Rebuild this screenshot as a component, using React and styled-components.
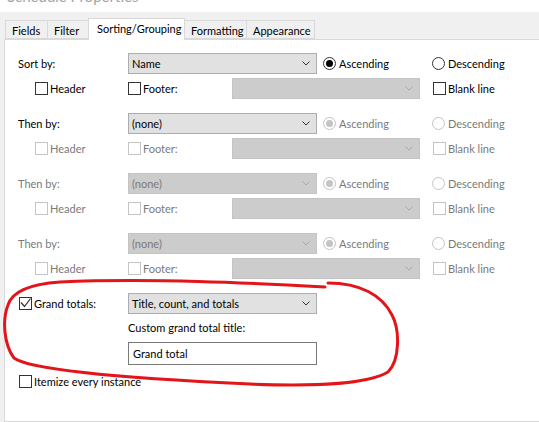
import React from 'react';
import styled, { createGlobalStyle } from 'styled-components';

const GlobalStyle = createGlobalStyle`
  html, body {
    margin: 0;
    padding: 0;
    background: #fff;
  }
  body {
    font-family: Lato, "Noto Sans", sans-serif;
    font-size: 11px;
    color: #000;
  }
`;

const Window = styled.div`
  position: relative;
  width: 539px;
  height: 422px;
  overflow: hidden;
  background: #fff;
`;

const TitleBar = styled.div`
  height: 12px;
  overflow: hidden;
  padding-left: 7px;
  span {
    display: block;
    margin-top: -11px;
    font-size: 15px;
    line-height: 15px;
    color: #a4a4a4;
  }
`;

const DialogBody = styled.div`
  background: #f0f0f0;
  padding: 6px 0 0 4px;
  height: 410px;
  box-sizing: border-box;
`;

const TabStrip = styled.div`
  display: flex;
  align-items: flex-end;
  height: 22px;
  margin: 0 0 -1px 1px;
  position: relative;
  z-index: 1;
`;

const Tab = styled.div`
  box-sizing: border-box;
  width: ${(p) => p.$w}px;
  height: ${(p) => (p.$active ? 22 : 19)}px;
  margin-bottom: ${(p) => (p.$active ? 0 : 1)}px;
  margin-left: -1px;
  border: 1px solid #d9d9d9;
  border-bottom: ${(p) => (p.$active ? 'none' : '1px solid #d9d9d9')};
  background: ${(p) => (p.$active ? '#fff' : '#f0f0f0')};
  display: flex;
  align-items: ${(p) => (p.$active ? 'flex-start' : 'center')};
  padding: ${(p) => (p.$active ? '3px 0 0 8px' : '1px 0 0 6px')};
  white-space: nowrap;
  &:first-child {
    margin-left: 0;
  }
`;

const TabPanel = styled.div`
  box-sizing: border-box;
  width: 560px;
  height: 383px;
  background: #fff;
  border: 1px solid #d9d9d9;
  padding: 13px 0 0 13px;
`;

const Group = styled.div`
  display: flex;
  flex-direction: column;
  gap: 4px;
  margin-bottom: 14px;
`;

const Row = styled.div`
  display: flex;
  align-items: center;
  height: 21px;
  padding-left: ${(p) => p.$indent || 0}px;
  margin-top: ${(p) => p.$top || 0}px;
`;

const Label = styled.div`
  width: ${(p) => p.$w}px;
  color: ${(p) => (p.$disabled ? '#7a7a7a' : '#000')};
  white-space: nowrap;
`;

const SelectBox = styled.div`
  box-sizing: border-box;
  width: ${(p) => p.$w}px;
  height: 21px;
  margin-left: ${(p) => p.$ml || 0}px;
  background: ${(p) => (p.$disabled ? '#cccccc' : '#e1e1e1')};
  border: 1px solid ${(p) => (p.$disabled ? '#c4c4c4' : '#adadad')};
  color: ${(p) => (p.$disabled ? '#7a7a7a' : '#000')};
  display: flex;
  align-items: center;
  justify-content: space-between;
  padding: 0 6px 0 3px;
  white-space: nowrap;
  svg {
    flex: none;
  }
`;

const Option = styled.div`
  display: flex;
  align-items: center;
  width: ${(p) => (p.$w ? `${p.$w}px` : 'auto')};
  margin-left: ${(p) => p.$ml || 0}px;
  color: ${(p) => (p.$disabled ? '#7a7a7a' : '#000')};
  white-space: nowrap;
`;

const Box = styled.span`
  box-sizing: border-box;
  flex: none;
  width: 13px;
  height: 13px;
  margin-right: 2px;
  border: 1px solid ${(p) => (p.$disabled ? '#c4c4c4' : '#333')};
  background: #fff;
  display: flex;
  align-items: center;
  justify-content: center;
`;

const Round = styled(Box)`
  border-radius: 50%;
  margin-right: 3px;
  &::after {
    content: '';
    display: ${(p) => (p.$on ? 'block' : 'none')};
    width: 7px;
    height: 7px;
    border-radius: 50%;
    background: ${(p) => (p.$disabled ? '#c4c4c4' : '#000')};
  }
`;

const Caption = styled.div`
  padding-left: 110px;
  height: 16px;
  line-height: 16px;
  margin-top: 6px;
`;

const TextBox = styled.div`
  box-sizing: border-box;
  width: 189px;
  height: 23px;
  margin: 6px 0 0 110px;
  border: 1px solid #7a7a7a;
  background: #fff;
  display: flex;
  align-items: center;
  padding-left: 4px;
`;

const Annotation = styled.svg`
  position: absolute;
  left: 0;
  top: 0;
  pointer-events: none;
`;

const Chevron = ({ disabled }) => (
  <svg width="8" height="5" viewBox="0 0 8 5">
    <polyline
      points="0.5,0.5 4,4 7.5,0.5"
      fill="none"
      stroke={disabled ? '#a8a8a8' : '#333'}
      strokeWidth="1"
    />
  </svg>
);

const Check = () => (
  <svg width="11" height="11" viewBox="0 0 11 11">
    <polyline points="1,4.5 4.5,8.5 10.5,0.5" fill="none" stroke="#333" strokeWidth="1.2" />
  </svg>
);

const Checkbox = ({ label, disabled, checked, w, ml }) => (
  <Option $disabled={disabled} $w={w} $ml={ml}>
    <Box $disabled={disabled}>{checked && <Check />}</Box>
    {label}
  </Option>
);

const Radio = ({ label, disabled, on, w, ml }) => (
  <Option $disabled={disabled} $w={w} $ml={ml}>
    <Round $disabled={disabled} $on={on} />
    {label}
  </Option>
);

const Select = ({ value, disabled, w, ml }) => (
  <SelectBox $disabled={disabled} $w={w} $ml={ml}>
    <span>{value}</span>
    <Chevron disabled={disabled} />
  </SelectBox>
);

const groups = [
  { label: 'Sort by:', value: 'Name', labelOff: false, selectOff: false, restOff: false },
  { label: 'Then by:', value: '(none)', labelOff: false, selectOff: false, restOff: true },
  { label: 'Then by:', value: '(none)', labelOff: true, selectOff: true, restOff: true },
  { label: 'Then by:', value: '(none)', labelOff: true, selectOff: true, restOff: true },
];

const tabs = [
  { name: 'Fields', w: 43 },
  { name: 'Filter', w: 42 },
  { name: 'Sorting/Grouping', w: 97, active: true },
  { name: 'Formatting', w: 63 },
  { name: 'Appearance', w: 69 },
];

export default function App() {
  return (
    <Window>
      <GlobalStyle />
      <TitleBar>
        <span>Schedule Properties</span>
      </TitleBar>
      <DialogBody>
        <TabStrip>
          {tabs.map((t) => (
            <Tab key={t.name} $w={t.w} $active={t.active}>
              {t.name}
            </Tab>
          ))}
        </TabStrip>
        <TabPanel>
          {groups.map((g, i) => (
            <Group key={i}>
              <Row>
                <Label $w={110} $disabled={g.labelOff}>
                  {g.label}
                </Label>
                <Select value={g.value} disabled={g.selectOff} w={189} />
                <Radio label="Ascending" on disabled={g.restOff} w={109} ml={6} />
                <Radio label="Descending" disabled={g.restOff} />
              </Row>
              <Row $indent={17}>
                <Checkbox label="Header" disabled={g.restOff} w={93} />
                <Checkbox label="Footer:" disabled={g.restOff} w={104} />
                <Select value="" disabled w={188} />
                <Checkbox label="Blank line" disabled={g.restOff} ml={13} />
              </Row>
            </Group>
          ))}
          <Row $top={3}>
            <Checkbox label="Grand totals:" checked w={109} ml={1} />
            <Select value="Title, count, and totals" w={189} />
          </Row>
          <Caption>Custom grand total title:</Caption>
          <TextBox>Grand total</TextBox>
          <Row $top={6}>
            <Checkbox label="Itemize every instance" ml={1} />
          </Row>
        </TabPanel>
      </DialogBody>
      <Annotation width="539" height="422" viewBox="0 0 539 422">
        <path
          d="M325,287 C250,283 150,278 60,282 C30,284 12,292 8,305 C2,320 4,345 14,358 C30,370 120,378 250,384 C320,387 370,383 388,372 C400,360 400,330 392,315 C382,295 360,283 328,283"
          fill="none"
          stroke="#e3151b"
          strokeWidth="3"
          strokeLinecap="round"
        />
      </Annotation>
    </Window>
  );
}
